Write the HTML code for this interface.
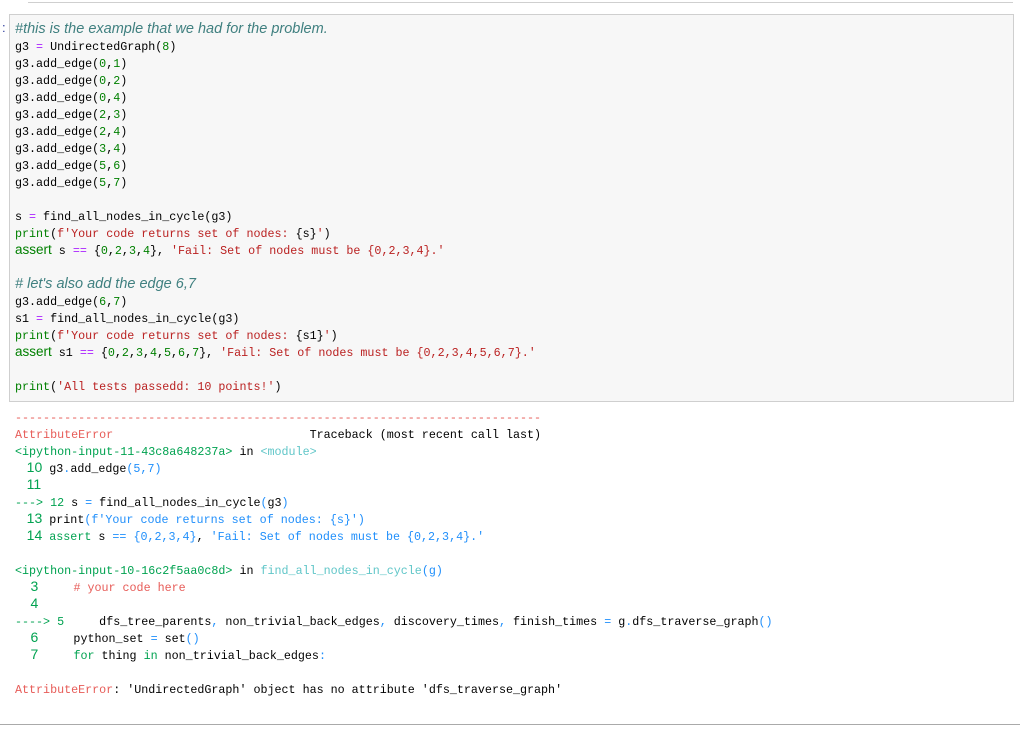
<!DOCTYPE html>
<html><head><style>
body{margin:0;width:1033px;height:730px;background:#fff;position:relative;overflow:hidden;font-family:"Liberation Mono",monospace;font-size:11.7px;}
.top{position:absolute;left:28px;top:0;width:985px;height:2px;border-bottom:1px solid #cfcfcf;}
.box{position:absolute;left:9px;top:14px;width:1003px;height:386px;background:#f7f7f7;border:1px solid #cfcfcf;}
.prompt{position:absolute;left:2px;top:20px;color:#303f9f;font-family:"Liberation Sans",sans-serif;font-size:13px;}
pre{margin:0;position:absolute;left:15px;font-family:"Liberation Mono",monospace;font-size:11.7px;line-height:17px;color:#000;}
.c{color:#408080;font-style:italic;font-family:"Liberation Sans",sans-serif;font-size:14.5px;line-height:0;}
.o{color:#aa22ff;}
.n{color:#008000;}
.s{color:#ba2121;}
.k{color:#008000;font-family:"Liberation Sans",sans-serif;font-size:13.5px;line-height:0;}
.r{color:#e75c58;}
.g{color:#00a250;}
.cy{color:#60c6c8;}
.b{color:#208ffb;}
.ln{color:#00a250;font-family:"Liberation Sans",sans-serif;font-size:14px;line-height:0;}
.bot{position:absolute;left:0;top:724px;width:1020px;border-top:1px solid #aaa;}
</style></head><body>
<div class="top"></div>
<div class="box"></div>
<div class="prompt">:</div>
<pre style="top:22px"><span class="c">#this is the example that we had for the problem.</span>
g3 <span class="o">=</span> UndirectedGraph(<span class="n">8</span>)
g3.add_edge(<span class="n">0</span>,<span class="n">1</span>)
g3.add_edge(<span class="n">0</span>,<span class="n">2</span>)
g3.add_edge(<span class="n">0</span>,<span class="n">4</span>)
g3.add_edge(<span class="n">2</span>,<span class="n">3</span>)
g3.add_edge(<span class="n">2</span>,<span class="n">4</span>)
g3.add_edge(<span class="n">3</span>,<span class="n">4</span>)
g3.add_edge(<span class="n">5</span>,<span class="n">6</span>)
g3.add_edge(<span class="n">5</span>,<span class="n">7</span>)

s <span class="o">=</span> find_all_nodes_in_cycle(g3)
<span class="n">print</span>(<span class="s">f'Your code returns set of nodes: </span>{s}<span class="s">'</span>)
<span class="k">assert</span> s <span class="o">==</span> {<span class="n">0</span>,<span class="n">2</span>,<span class="n">3</span>,<span class="n">4</span>}, <span class="s">'Fail: Set of nodes must be {0,2,3,4}.'</span>

<span class="c"># let's also add the edge 6,7</span>
g3.add_edge(<span class="n">6</span>,<span class="n">7</span>)
s1 <span class="o">=</span> find_all_nodes_in_cycle(g3)
<span class="n">print</span>(<span class="s">f'Your code returns set of nodes: </span>{s1}<span class="s">'</span>)
<span class="k">assert</span> s1 <span class="o">==</span> {<span class="n">0</span>,<span class="n">2</span>,<span class="n">3</span>,<span class="n">4</span>,<span class="n">5</span>,<span class="n">6</span>,<span class="n">7</span>}, <span class="s">'Fail: Set of nodes must be {0,2,3,4,5,6,7}.'</span>

<span class="n">print</span>(<span class="s">'All tests passedd: 10 points!'</span>)</pre>
<pre style="top:410px"><span class="r">---------------------------------------------------------------------------</span>
<span class="r">AttributeError</span>                            Traceback (most recent call last)
<span class="g">&lt;ipython-input-11-43c8a648237a&gt;</span> in <span class="cy">&lt;module&gt;</span>
<span class="ln">   10</span> g3<span class="b">.</span>add_edge<span class="b">(5,7)</span>
<span class="ln">   11</span>
<span class="g">---&gt; 12</span> s <span class="b">=</span> find_all_nodes_in_cycle<span class="b">(</span>g3<span class="b">)</span>
<span class="ln">   13</span> print<span class="b">(f'Your code returns set of nodes: {s}')</span>
<span class="ln">   14</span> <span class="g">assert</span> s <span class="b">==</span> <span class="b">{0,2,3,4}</span>, <span class="b">'Fail: Set of nodes must be {0,2,3,4}.'</span>

<span class="g">&lt;ipython-input-10-16c2f5aa0c8d&gt;</span> in <span class="cy">find_all_nodes_in_cycle</span><span class="b">(g)</span>
<span class="ln">    3</span>     <span class="r"># your code here</span>
<span class="ln">    4</span>
<span class="g">----&gt; 5</span>     dfs_tree_parents<span class="b">,</span> non_trivial_back_edges<span class="b">,</span> discovery_times<span class="b">,</span> finish_times <span class="b">=</span> g<span class="b">.</span>dfs_traverse_graph<span class="b">()</span>
<span class="ln">    6</span>     python_set <span class="b">=</span> set<span class="b">()</span>
<span class="ln">    7</span>     <span class="g">for</span> thing <span class="g">in</span> non_trivial_back_edges<span class="b">:</span>

<span class="r">AttributeError</span>: 'UndirectedGraph' object has no attribute 'dfs_traverse_graph'</pre>
<div class="bot"></div>
</body></html>
